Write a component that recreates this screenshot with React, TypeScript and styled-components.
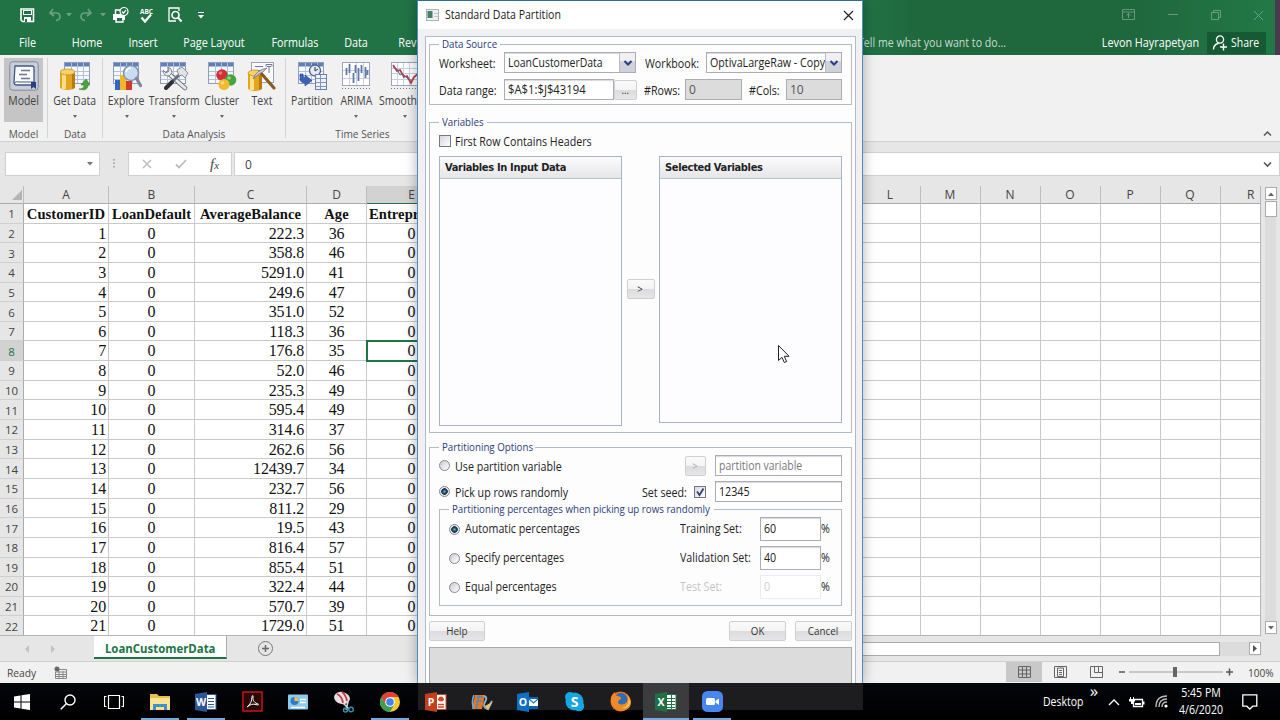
import type { ReactNode } from 'react';
import styled, { createGlobalStyle, css } from 'styled-components';

const theme = {
  green: '#217346',
  ui: '"Open Sans", "Noto Sans", sans-serif',
  serif: '"Liberation Serif", "Times New Roman", serif',
  line: '#c9c9c9',
  chrome: '#e6e6e6',
  ribbon: '#f1f1f1',
  field: '#abadb3',
};

const GlobalStyle = createGlobalStyle`
  * { box-sizing: border-box; }
  body { margin: 0; overflow: hidden; background: #fff; font-family: ${theme.ui}; }
`;

const Desktop = styled.div`
  position: relative;
  width: 1280px;
  height: 720px;
  overflow: hidden;
  display: flex;
  flex-direction: column;
`;

const Excel = styled.div`
  height: 683px;
  display: flex;
  flex-direction: column;
`;

/* narrow system lettering */
const narrow = (by = 0.89, from = 'center') => css`
  transform: scaleX(${by});
  transform-origin: ${from};
`;

const Narrow = styled.span<{ $by?: number; $from?: string }>`
  display: inline-block;
  white-space: nowrap;
  ${p => narrow(p.$by, p.$from)}
`;

/* ---------- title and tabs ---------- */

const GreenBar = styled.div`
  height: 55px;
  flex: none;
  color: #fff;
  border-right: 5px solid #4b3a4e;
  background: linear-gradient(90deg, #217346 0, #217346 860px, #1f673d 920px, #1f673d 1130px, #237848 1275px);
`;

const TitleRow = styled.div`
  height: 30px;
  display: flex;
  align-items: center;
  justify-content: space-between;
`;

const QuickAccess = styled.div`
  display: flex;
  align-items: center;
  height: 30px;
  margin-left: 13px;
`;

const Slot = styled.div<{ $w: number; $dim?: boolean }>`
  width: ${p => p.$w}px;
  flex: none;
  display: flex;
  align-items: center;
  justify-content: center;
  opacity: ${p => (p.$dim ? 0.32 : 1)};
`;

const Tabs = styled.div`
  height: 25px;
  display: flex;
  align-items: center;
`;

const Tab = styled.div<{ $w: number }>`
  width: ${p => p.$w}px;
  height: 16px;
  flex: none;
  display: flex;
  justify-content: center;
  font-size: 12px;
  line-height: 16px;
  white-space: nowrap;
  ${narrow(0.9)}
`;

const TellMe = styled(Tab)`
  margin-left: auto;
  justify-content: flex-start;
  color: #c3dccd;
  ${narrow(0.885, 'left')}
`;

const Share = styled.div`
  width: 59px;
  height: 22px;
  margin: 0 9px 0 8px;
  padding-left: 5px;
  display: flex;
  align-items: center;
  gap: 3px;
  background: #155a33;
  font-size: 12px;
`;

/* ---------- ribbon ---------- */

const Ribbon = styled.div`
  height: 87px;
  flex: none;
  display: flex;
  background: ${theme.ribbon};
  border-bottom: 1px solid #d2d2d2;
  color: #444;
`;

const RibbonGroup = styled.div<{ $w: number }>`
  width: ${p => p.$w}px;
  height: 80px;
  margin-top: 3px;
  flex: none;
  display: flex;
  flex-direction: column;
  justify-content: space-between;
  border-right: 1px solid #d4d4d4;
`;

const RibbonButtons = styled.div`
  display: flex;
  height: 64px;
`;

const RibbonButton = styled.div<{ $w: number; $active?: boolean }>`
  width: ${p => p.$w}px;
  flex: none;
  display: flex;
  flex-direction: column;
  align-items: center;
  padding-top: 3px;
  font-size: 12px;
  line-height: 16px;
  white-space: nowrap;
  ${p => p.$active && css`
    margin-left: 4px;
    background: #c5c5c5;
  `}
`;

const RibbonText = styled.span`
  margin-top: 2px;
  ${narrow(0.87)}
`;

const Caret = styled.i`
  margin-top: 6px;
  border: 2.5px solid transparent;
  border-top: 3px solid #666;
  border-bottom: 0;
`;

const GroupName = styled.div`
  text-align: center;
  font-size: 11px;
  line-height: 14px;
  color: #555;
  height: 11px;
  ${narrow(0.92)}
`;

const Collapse = styled.div`
  margin: auto 8px 4px auto;
  line-height: 0;
`;

/* ---------- formula bar ---------- */

const FormulaBar = styled.div`
  height: 44px;
  flex: none;
  display: flex;
  align-items: flex-start;
  padding: 10px 0 0 5px;
  background: ${theme.chrome};
`;

const FormulaBox = styled.div<{ $w?: number }>`
  height: 24px;
  ${p => (p.$w ? `width: ${p.$w}px; flex: none;` : 'flex: 1;')}
  border: 1px solid #d0d0d0;
  background: #fff;
  display: flex;
  align-items: center;
  color: #444;
  font-size: 12px;
`;

const Dots = styled.div`
  width: 28px;
  display: flex;
  height: 24px;
  justify-content: center;
  align-items: center;
`;

const Fx = styled.span`
  width: 33px;
  text-align: center;
  font-family: ${theme.serif};
  font-style: italic;
  font-size: 15px;
  small { font-size: 11px; }
`;

/* ---------- sheet ---------- */

const SheetArea = styled.div`
  height: 450px;
  flex: none;
  display: flex;
  background: ${theme.chrome};
`;

const columns = '24px 85px 86px 112px 60px 90px repeat(6, 67.25px) repeat(6, 60px) 40px';

const Sheet = styled.div`
  width: 1261px;
  display: grid;
  grid-template-columns: ${columns};
  grid-template-rows: 18px repeat(22, 19.65px);
  overflow: hidden;
  isolation: isolate;
  border-right: 1px solid #b5b5b5;
  border-bottom: 1px solid #b5b5b5;
`;

const ColHead = styled.div<{ $active?: boolean }>`
  display: flex;
  align-items: center;
  justify-content: center;
  font-size: 12px;
  color: #444;
  border-right: 1px solid #bdbdbd;
  border-bottom: 1px solid ${p => (p.$active ? theme.green : '#ababab')};
  background: ${p => (p.$active ? '#d2d2d2' : theme.chrome)};
`;

const LastHead = styled(ColHead)`
  justify-content: flex-end;
  padding-right: 5px;
`;

const Line = styled.div`
  display: contents;
`;

const RowHead = styled.div<{ $active?: boolean }>`
  display: flex;
  align-items: center;
  justify-content: center;
  font-size: 11.5px;
  line-height: 14px;
  padding-top: 2px;
  color: ${p => (p.$active ? theme.green : '#444')};
  background: ${p => (p.$active ? '#d2d2d2' : theme.chrome)};
  border-right: 1px solid #ababab;
  border-bottom: 1px solid #cfcfcf;
`;

const Cell = styled.div<{ $align?: string; $bold?: boolean; $selected?: boolean }>`
  background: #fff;
  font-family: ${theme.serif};
  font-size: ${p => (p.$bold ? 14.6 : 16)}px;
  font-weight: ${p => (p.$bold ? 700 : 400)};
  letter-spacing: ${p => (p.$bold ? 0.05 : -0.15)}px;
  line-height: 20.5px;
  color: #111;
  text-align: ${p => p.$align ?? 'center'};
  padding: 0 2px;
  white-space: nowrap;
  overflow: hidden;
  border-right: 1px solid ${theme.line};
  border-bottom: 1px solid ${theme.line};
  ${p => p.$selected && css`
    outline: 2px solid ${theme.green};
    outline-offset: -1px;
    z-index: 1;
  `}
`;

const VScroll = styled.div`
  width: 15px;
  padding: 1px 0 2px 4px;
  display: flex;
  flex-direction: column;
`;

const ScrollButton = styled.div`
  width: 12px;
  height: 13px;
  flex: none;
  border: 1px solid #ababab;
  background: #fff;
  display: flex;
  align-items: center;
  justify-content: center;
  color: #666;
`;

const VThumb = styled.div`
  width: 12px;
  height: 16px;
  margin-top: 1px;
  background: #fff;
  border: 1px solid #ababab;
`;

const VTrack = styled.div`
  flex: 1;
  background: #dcdcdc;
`;

const SheetTabs = styled.div`
  height: 25px;
  flex: none;
  display: flex;
  background: ${theme.chrome};
`;

const NavArrows = styled.div`
  width: 94px;
  padding-left: 24px;
  display: flex;
  align-items: center;
  gap: 20px;
`;

const SheetTab = styled.div`
  width: 133px;
  height: 23px;
  background: #fff;
  border-bottom: 2px solid ${theme.green};
  border-right: 1px solid #ababab;
  color: ${theme.green};
  font-weight: 700;
  font-size: 12px;
  line-height: 25px;
  text-align: center;
`;

const AddSheet = styled.div`
  margin: 4px 0 0 30px;
  line-height: 0;
`;

const HScroll = styled.div`
  margin: 6px 19px 0 auto;
  width: 500px;
  height: 14px;
  display: flex;
  background: #dcdcdc;
`;

const HThumb = styled.div`
  width: 459px;
  border: 1px solid #ababab;
  background: #fff;
`;

const HTrack = styled.div`
  flex: 1;
`;

const StatusBar = styled.div`
  height: 22px;
  flex: none;
  display: flex;
  align-items: center;
  background: ${theme.ribbon};
  border-top: 1px solid #cfcfcf;
  font-size: 11px;
  color: #444;
  padding: 0 0 1px 7px;
`;

const ViewButton = styled.div<{ $active?: boolean }>`
  width: 36px;
  height: 20px;
  display: flex;
  align-items: center;
  justify-content: center;
  background: ${p => (p.$active ? '#c8c8c8' : 'transparent')};
`;

const Zoom = styled.span`
  width: 46px;
  padding-left: 14px;
  font-size: 11.5px;
`;

/* ---------- dialog ---------- */

const Dialog = styled.div`
  position: absolute;
  left: 417px;
  top: 0;
  width: 446px;
  height: 683px;
  overflow: hidden;
  background: #f0f0f2;
  border: 1px solid #4d8fc4;
  border-top-color: #2d6f88;
  border-bottom: 0;
  font-size: 12px;
  line-height: 16px;
  color: #222;
`;

const DialogShadow = styled.div`
  position: absolute;
  left: 417px;
  top: 0;
  width: 446px;
  height: 683px;
  box-shadow: 0 0 12px rgba(0, 0, 0, 0.32);
  clip-path: inset(0 -14px 0 -14px);
`;

const DialogTitle = styled.div`
  height: 28px;
  display: flex;
  align-items: center;
  padding: 0 8px;
  background: #fff;
`;

const DialogName = styled.span`
  margin-left: 6px;
  flex: 1;
  ${narrow(0.88, 'left')}
`;

const DialogBody = styled.div`
  margin: 7px 6px 0 7px;
  height: 660px;
  border: 1px solid #a9bdd4;
  background: #fdfdfe;
  padding: 0 3px;
`;

const Group = styled.fieldset<{ $h: number; $mt?: number }>`
  margin: ${p => p.$mt ?? 0}px 0 0;
  height: ${p => p.$h}px;
  min-width: 0;
  border: 1px solid #b4bac6;
  padding: 0 9px;
`;

const Legend = styled.legend<{ $w: number }>`
  width: ${p => p.$w}px;
  height: 14px;
  margin: 0;
  padding: 0 3px;
  font-size: 11px;
  line-height: 14px;
  color: #2b3c78;
  white-space: nowrap;
`;

const Row = styled.div<{ $h: number; $mt?: number }>`
  display: flex;
  align-items: center;
  height: ${p => p.$h}px;
  margin-top: ${p => p.$mt ?? 0}px;
`;

const Label = styled.span<{ $w?: number; $flat?: boolean; $faint?: boolean }>`
  ${p => p.$w && `width: ${p.$w}px;`}
  flex: none;
  padding-top: ${p => (p.$flat ? 0 : 2)}px;
  white-space: nowrap;
  color: ${p => (p.$faint ? '#c4c4c8' : 'inherit')};
  ${narrow(0.89, 'left')}
`;

const Field = styled.div<{ $w: number; $h?: number; $gray?: boolean; $muted?: boolean; $faint?: boolean }>`
  width: ${p => p.$w}px;
  height: ${p => p.$h ?? 21}px;
  flex: none;
  display: flex;
  align-items: center;
  overflow: hidden;
  white-space: nowrap;
  padding-left: 3px;
  border: 1px solid ${p => (p.$faint ? '#ececee' : theme.field)};
  background: ${p => (p.$gray ? '#dcdcdd' : '#fff')};
  box-shadow: ${p => (p.$gray || p.$faint ? 'none' : 'inset 0 2px 1px -1px #d8d8de')};
  color: ${p => (p.$faint ? '#d0d0d4' : p.$muted ? '#777' : p.$gray ? '#555' : '#222')};
`;

const FieldText = styled.span`
  flex: 1;
  min-width: 0;
  overflow: hidden;
`;

const DropArrow = styled.span`
  width: 16px;
  height: 19px;
  flex: none;
  display: flex;
  align-items: center;
  justify-content: center;
  border-left: 1px solid #b9bcc8;
  background: linear-gradient(#f0f0f4 40%, #cfd2da 45%);
`;

const ButtonBox = styled.div<{ $w: number; $muted?: boolean }>`
  width: ${p => p.$w}px;
  height: 20px;
  flex: none;
  display: flex;
  align-items: center;
  justify-content: center;
  border: 1px solid #cfcfd2;
  border-radius: 2px;
  background: linear-gradient(#fafafa 0, #f4f4f5 50%, #dcdcde 51%, #e6e6e8 100%);
  color: ${p => (p.$muted ? '#aaa' : '#333')};
  font-size: 11px;
`;

const Button = ({ w, muted, children }: { w: number; muted?: boolean; children: ReactNode }) => (
  <ButtonBox $w={w} $muted={muted}><Narrow>{children}</Narrow></ButtonBox>
);

const Check = styled.span`
  width: 12px;
  height: 12px;
  flex: none;
  border: 1px solid #74777f;
  background: linear-gradient(135deg, #d6d8dc, #fdfdfd);
  line-height: 0;
`;

const Radio = styled.span<{ $on?: boolean }>`
  width: 11px;
  height: 11px;
  flex: none;
  border: 1px solid #85888e;
  border-radius: 50%;
  background: ${p => (p.$on
    ? 'radial-gradient(circle at 50% 50%, #6fb3cf 0, #1f4560 2px, #1d3850 3px, #e6e8ea 3.6px)'
    : 'linear-gradient(135deg, #c9cbd0, #fff)')};
`;

const Gap = styled.span<{ $w?: number }>`
  ${p => (p.$w === undefined ? 'flex: 1;' : `width: ${p.$w}px; flex: none;`)}
`;

const Lists = styled.div`
  display: flex;
  align-items: flex-start;
  justify-content: space-between;
  margin-top: 8px;
`;

const ArrowHolder = styled.div`
  margin-top: 123px;
  display: flex;
  justify-content: center;
`;

const List = styled.div<{ $h: number }>`
  width: 183px;
  height: ${p => p.$h}px;
  border: 1px solid #a4b4ca;
  background: #fdfdff;
`;

const ListHead = styled.div`
  height: 22px;
  padding-left: 5px;
  font-weight: 700;
  font-size: 11px;
  line-height: 21px;
  font-family: "DejaVu Sans Condensed", "DejaVu Sans", sans-serif;
  font-stretch: condensed;
  letter-spacing: -0.33px;
  border-bottom: 1px solid #bcc2cc;
  background: linear-gradient(#fbfbfc, #e6e6e9);
`;

const Message = styled.div`
  height: 60px;
  margin-top: 6px;
  border: 1px solid #a9a9ad;
  background: #dcdcdd;
`;

/* ---------- taskbar ---------- */

const Taskbar = styled.div`
  height: 37px;
  flex: none;
  display: flex;
  color: #fff;
  background:
    linear-gradient(90deg, transparent 418px, #1d1d1f 418px, #1d1d1f 863px, transparent 863px) 0 0 / 100% 27px no-repeat,
    linear-gradient(#05060a, #000);
`;

const TaskList = styled.div`
  display: flex;
  margin-left: -1px;
`;

const Task = styled.div<{ $open?: boolean; $active?: boolean }>`
  width: 46px;
  height: 37px;
  flex: none;
  display: flex;
  align-items: center;
  justify-content: center;
  background: ${p => (p.$active ? '#3b3c3e' : 'none')};
  padding-top: ${p => (p.$open || p.$active ? 2 : 0)}px;
  border-bottom: ${p => (p.$open || p.$active ? '2px solid #76a9dc' : '0')};
  ${p => p.$open && css`
    width: 38px;
    margin: 0 4px;
  `}
`;

const Tray = styled.div`
  margin-left: auto;
  display: flex;
  align-items: center;
  font-size: 12px;
  line-height: 17px;
`;

const Clock = styled.div`
  width: 58px;
  margin-top: -2px;
  text-align: center;
  ${narrow(0.88)}
`;

const Raquo = styled.span`
  width: 22px;
  text-align: center;
  align-self: flex-start;
  font-size: 17px;
  line-height: 15px;
`;

const Pointer = styled.svg`
  position: absolute;
  left: 777px;
  top: 344px;
`;

/* ---------- icons ---------- */

const Icon = styled.svg`
  flex: none;
`;

const Art = ({ children, w = 28, h = w }: { children: ReactNode; w?: number; h?: number }) => (
  <Icon width={w} height={h} viewBox={`0 0 ${w} ${h}`} fill="none">{children}</Icon>
);

const SheetBase = ({ x = 4 }: { x?: number }) => (
  <g>
    <rect x={x + 0.5} y="1.5" width="25" height="21" fill="#f5f8fd" stroke="#8e9dbd" />
    <rect x={x + 1} y="2" width="24" height="3.5" fill="#5f7fb6" />
    <path d={`M${x + 1} 10.5h24M${x + 1} 14.5h24M${x + 1} 18.5h24M${x + 7.5} 2v20M${x + 13.5} 2v20M${x + 19.5} 2v20`} stroke="#b3c1da" />
  </g>
);

const Cylinder = ({ x = 0, y = 8, w = 15 }: { x?: number; y?: number; w?: number }) => (
  <g>
    <path d={`M${x} ${y + 3}v15c0 4 ${w} 4 ${w} 0v-15z`} fill="#e3a51d" />
    <path d={`M${x + 2} ${y + 5}h4v15h-4z`} fill="#fbe28a" />
    <path d={`M${x + w - 3} ${y + 4}h3v15l-3 1z`} fill="#b97a0c" />
    <ellipse cx={x + w / 2} cy={y + 3} rx={w / 2} ry="3" fill="#f8d266" stroke="#b9851b" strokeWidth=".7" />
  </g>
);

const ModelIcon = () => (
  <Art w={30}>
    <rect x=".8" y=".8" width="28.4" height="28.4" rx="3" fill="#c9ced8" stroke="#7e8ca6" />
    <path d="M6 5h17q2 0 2 2v17h-17q-3 0-3-3z" fill="#fbfcff" stroke="#42587f" strokeWidth="1.3" />
    <path d="M5 22q2-2 5-1h15" stroke="#42587f" />
    <path d="M12 9.500h9M10 13.500h8M12 17.500h9" stroke="#6b7690" strokeWidth="1.4" />
    <path d="M22 21h5v7l-2.500-2-2.500 2z" fill="#2a3e83" />
  </Art>
);
const GetDataIcon = () => (
  <Art w={30}><SheetBase /><Cylinder /><path d="M19 28c4 0 5-2 5-4h-3l5-6 4 6h-2c0 4-3 6-9 4z" fill="#4ca33c" stroke="#2d7a25" strokeWidth=".6" /></Art>
);
const ExploreIcon = () => (
  <Art w={30}>
    <SheetBase x={1} />
    <path d="M3 19h5v10h-5z" fill="#3566c6" /><path d="M8 14h6v15h-6z" fill="#f0b824" /><path d="M14 20h6v9h-6z" fill="#d33a2c" />
    <circle cx="19" cy="12" r="7.500" fill="#c9dcf3" stroke="#8291ab" strokeWidth="1.500" />
    <path d="M14 11q1-4 5-4" stroke="#fff" strokeWidth="1.500" /><path d="M24.500 17.500l4 7" stroke="#7e8797" strokeWidth="3.200" strokeLinecap="round" />
  </Art>
);
const TransformIcon = () => (
  <Art w={30}>
    <SheetBase x={1} />
    <path d="M9 12L26 27" stroke="#6b6f78" strokeWidth="4.500" strokeLinecap="round" /><path d="M9 12L26 27" stroke="#e9ebee" strokeWidth="3" strokeLinecap="round" />
    <path d="M4 9q0 6 6 6l3-3q0-5-4-6l1 4-3 2z" fill="#e9ebee" stroke="#6b6f78" strokeWidth=".8" />
    <path d="M21 13L9 25" stroke="#6b6f78" strokeWidth="3" /><path d="M13 21L7 27" stroke="#2e3138" strokeWidth="4" strokeLinecap="round" />
    <path d="M18 9l5-3 6 6-3 5-3-3-3 1z" fill="#dfe2e6" stroke="#777c86" strokeWidth=".8" />
  </Art>
);
const ClusterIcon = () => (
  <Art w={30}>
    <SheetBase x={1} />
    <circle cx="15" cy="14" r="5.800" fill="#cf3138" /><circle cx="23.500" cy="19" r="5.800" fill="#42a63f" /><circle cx="17" cy="23.500" r="5.500" fill="#f2b92c" />
    <circle cx="13.500" cy="12" r="1.800" fill="#e8797b" /><circle cx="22" cy="17" r="1.800" fill="#8fd486" /><circle cx="15.500" cy="22" r="1.800" fill="#fbe08a" />
  </Art>
);
const TextIcon = () => (
  <Art w={30}>
    <rect x="4.500" y="1.500" width="22" height="20" fill="#fafaff" stroke="#9aa2b8" />
    <path d="M8 5.500h8M8 9.500h7M20 5.500h4M22 6v6M19 5.500v-2h6v2" stroke="#6f7a9a" />
    <Cylinder x={1} y={9} w={14} />
    <path d="M13 11L27 27" stroke="#8a5a23" strokeWidth="3.200" strokeLinecap="round" /><path d="M6 18q3-9 14-11l-4 4q-5 2-10 7z" fill="#c8cbd2" stroke="#666b75" strokeWidth=".7" />
  </Art>
);
const PartitionIcon = () => (
  <Art w={30}>
    <SheetBase x={1} />
    <circle cx="18" cy="9.500" r="5.500" fill="#e4ebf7" stroke="#4e5f88" strokeWidth="1.300" /><path d="M18 6v4l3-2" stroke="#333" />
    <rect x="18.500" y="13.500" width="11" height="15" fill="#edf3fc" stroke="#6b7fae" /><path d="M19 17.500h10M19 21.500h10M19 25.500h10M23.500 14v14" stroke="#8496bd" />
    <path d="M3 13v6q1 3 5 3v3l7-5.500-7-5.500v3q-2 0-2-4z" fill="#3c62b8" stroke="#26458d" strokeWidth=".6" />
  </Art>
);
const ArimaIcon = () => (
  <Art w={30}>
    <rect x="1.500" y="1.500" width="27" height="23" fill="#fff" stroke="#9aa4ba" /><path d="M2 9.500h26M2 17.500h26M8.500 2v22M15.500 2v22M22.500 2v22" stroke="#c8cfdf" />
    <path d="M5.500 7v7M8.500 3v9M12.500 12v10M14.500 4v8M17.500 7v13M20.500 4v8M24.500 6v11M26.500 9v5" stroke="#6078a8" strokeWidth="1.800" /><path d="M1 27.500h28" stroke="#777" strokeDasharray="1 2" />
  </Art>
);
const SmoothIcon = () => (
  <Art w={30}>
    <rect x="1.500" y="1.500" width="27" height="23" fill="#fff" stroke="#9aa4ba" /><path d="M2 7.500h26M2 12.500h26M2 18.500h26M7.500 2v22M13.500 2v22M19.500 2v22" stroke="#c8cfdf" />
    <path d="M3 4l4 6 3-1 4 7 3-1 4 7 3-6 5-4" stroke="#b63e48" strokeWidth="1.800" /><path d="M3 6l4 2 3 6 3-1 5 5 3 1" stroke="#596b92" /><path d="M1 27.500h28" stroke="#777" strokeDasharray="1 2" />
  </Art>
);

const CaretDown = ({ c = '#fff' }: { c?: string }) => <Art w={6} h={4}><path d="M0 0h6L3 3.500z" fill={c} /></Art>;

const quickAccess = [
  { w: 28, art: <Art w={15}><path d="M1 1h12.500v12.500H2.500L1 12z" stroke="#fff" strokeWidth="1.600" /><path d="M3 2h9v5H3zM4 9h7v5H4z" fill="#fff" /><path d="M4 3h7v3H4zM5 11h2v3H5z" fill="#217346" /></Art> },
  { w: 28, dim: true, art: <Art w={14}><path d="M5 1L2 5l4 3M2 5h6q4 0 4 3.500T8 12.500" stroke="#fff" strokeWidth="1.700" /></Art> },
  { w: 0, dim: true, art: <CaretDown /> },
  { w: 34, dim: true, art: <Art w={14}><path d="M9 1l3 4-4 3M12 5H6Q2 5 2 8.500T6 12.500" stroke="#fff" strokeWidth="1.700" /></Art> },
  { w: 0, dim: true, art: <CaretDown /> },
  { w: 34, art: <Art w={17}><path d="M1 7h12v6H1z" fill="#fff" /><path d="M3.500 7V3h5M4 11h7v4H4z" stroke="#fff" strokeWidth="1.400" /><path d="M5 11h5v3H5z" fill="#217346" /><circle cx="12" cy="4.500" r="4" fill="#217346" stroke="#fff" strokeWidth="1.200" /><path d="M10 4.500l1.500 1.700L14 3" stroke="#fff" strokeWidth="1.200" /></Art> },
];

const WindowButtons = () => (
  <>
    <Slot $w={52} $dim><Art w={14} h={12}><path d="M.5.5h12v10H.5zM.5 3h12M6.500 9V4.500M4.500 6.500l2-2 2 2" stroke="#fff" /></Art></Slot>
    <Slot $w={36} $dim><Art w={10} h={2}><path d="M0 .5h10" stroke="#fff" /></Art></Slot>
    <Slot $w={50} $dim><Art w={11}><path d="M.5 2.500h7v7h-7zM2.500 2.500v-2h7v7h-2" stroke="#fff" /></Art></Slot>
    <Slot $w={34} $dim><Art w={11}><path d="M1 1l9 9M10 1l-9 9" stroke="#fff" /></Art></Slot>
  </>
);

const Tile = ({ color, dark, letter, children }: { color: string; dark: string; letter: string; children: ReactNode }) => (
  <Art w={22} h={22}>
    <rect x="10" y="3.500" width="11" height="15" fill="#fff" stroke={color} />
    {children}
    <path d="M0 3l12-2v20L0 19z" fill={dark} />
    <text x="6" y="15" textAnchor="middle" fontSize="10.500" fontWeight="700" fontFamily="Open Sans" fill="#fff">{letter}</text>
  </Art>
);

const tasks: { art: ReactNode; open?: boolean; active?: boolean }[] = [
  { art: <Art w={16}><path d="M0 2.500l6.500-1v6H0zM7.500 1.300L16 0v7.500H7.500zM0 8.500h6.500v6L0 13.500zM7.500 8.500H16V16l-8.500-1.200z" fill="#fff" /></Art> },
  { art: <Art w={16}><circle cx="10" cy="6" r="5" stroke="#fff" strokeWidth="1.400" /><path d="M6.500 9.500L.8 15.200" stroke="#fff" strokeWidth="1.500" /></Art> },
  { art: <Art w={20} h={16}><path d="M4.500 1.500h11v13h-11zM2.500 2.500h-2v10h2M17.500 2.500h2v10h-2" stroke="#fff" strokeWidth="1.200" /></Art> },
  { open: true, art: <Art w={20} h={18}><path d="M0 1h7l2 2h11v14H0z" fill="#e8bd4b" /><path d="M0 5h20v12H0z" fill="#fbe394" /><path d="M3 17v-6h14v6h-3v-3H6v3z" fill="#3d93c9" /></Art> },
  { open: true, art: <Tile color="#2b579a" dark="#2b579a" letter="W"><path d="M13 7.500h6M13 10.500h6M13 13.500h6M13 16h6" stroke="#2b579a" /></Tile> },
  { art: <Art w={21}><rect x="1" y="1" width="19" height="19" fill="#2c0707" stroke="#c3161c" strokeWidth="1.500" /><path d="M5 16c3-2 5-6 5-10 0-2 1.500-2 1 0-.5 4 2 6 5 7 1.500.5 0 1.500-2 .5-3-1-6 0-9 2.500z" stroke="#fff" strokeWidth="1" /></Art> },
  { art: <Art w={20} h={16}><rect width="20" height="15" y=".5" rx="1" fill="#8ecaf0" /><circle cx="6.500" cy="7" r="4" fill="#2f7dc4" /><path d="M6.500 7V3a4 4 0 014 4z" fill="#f6c244" /><path d="M12 5.500h6M12 8.500h6M3 13.500h14" stroke="#fff" strokeWidth="1.500" /></Art> },
  { art: <Art w={22}><ellipse cx="9" cy="7" rx="8" ry="6" fill="#e9dfe2" transform="rotate(15 9 7)" /><path d="M4 3q5 2 6 9M9 1q4 3 5 9" stroke="#bd3d4b" strokeWidth="1.800" /><path d="M10 12l6 6M15 11l-2 8" stroke="#cfd8df" strokeWidth="1.500" /><circle cx="18" cy="18.500" r="2.300" stroke="#3c8aa8" strokeWidth="1.400" /><circle cx="12.500" cy="19" r="2" stroke="#3c8aa8" strokeWidth="1.400" /></Art> },
  { open: true, art: <Art w={20}><circle cx="10" cy="10" r="10" fill="#f7c934" /><path d="M1.340 5A10 10 0 0118.660 5H10L5.670 12.500z" fill="#dc4437" /><path d="M1.340 5A10 10 0 0010 20l4.330-7.500H5.670z" fill="#3b9e52" /><circle cx="10" cy="10" r="4.800" fill="#fff" /><circle cx="10" cy="10" r="3.800" fill="#4482ec" /></Art> },
  { art: <Tile color="#d24726" dark="#c43e1c" letter="P"><path d="M13 8.500h6M13 13.500h6M13 16h6" stroke="#d24726" strokeWidth="1.500" /><circle cx="16" cy="8" r="2.500" fill="#d24726" /></Tile> },
  { art: <Art w={22} h={18}><path d="M4 2h10l-3 14H1z" fill="#e1772d" /><path d="M3 2q-3 7 0 14" stroke="#7ba4c2" strokeWidth="1.800" /><path d="M6 4h6M5 8h6M8 2L5 16" stroke="#5a86ab" strokeWidth="1.400" /><path d="M13 3q4 1 1 6t3 7l4-8" stroke="#8fb0c4" strokeWidth="2" /><path d="M14 13l7-4-4 8z" fill="#e9c46d" /></Art> },
  { art: <Art w={22}><path d="M10 6h11v12H10z" fill="#0a64b4" /><path d="M12 8h9v7h-9z" fill="#fff" /><path d="M12 8l4.500 4L21 8" stroke="#0f78d0" strokeWidth="1.300" /><path d="M0 3l12-2v20L0 19z" fill="#0f6fc5" /><text x="6" y="15" textAnchor="middle" fontSize="10.500" fontWeight="700" fontFamily="Open Sans" fill="#fff">O</text></Art> },
  { art: <Art w={21}><circle cx="10.500" cy="10.500" r="9" fill="#17a5e4" /><circle cx="6" cy="6" r="5" fill="#17a5e4" /><circle cx="15" cy="15" r="5.200" fill="#17a5e4" /><text x="10.500" y="15.500" textAnchor="middle" fontSize="14" fontWeight="700" fontFamily="Open Sans" fill="#fff">S</text></Art> },
  { art: <Art w={21}><circle cx="10.500" cy="10.500" r="10" fill="#e8742a" /><circle cx="11" cy="8.500" r="6.500" fill="#2d6cb7" /><path d="M1 6q1-3 4-5 0 3 2 4 4 0 4 3-3 1-3 4 3 3 8 0 4-4 1-9 7 7 2 14-7 6-14 0Q0 13 1 6z" fill="#ee8a2b" /><path d="M17 4q3 5 0 10-2 3-5 3 7 1 8-5 0-5-3-8z" fill="#f8c840" /></Art> },
  { active: true, art: <Tile color="#217346" dark="#1e7145" letter="X"><path d="M12 7.500h8M12 10.500h8M12 13.500h8M12 16.500h8M16.500 4v14" stroke="#217346" /></Tile> },
  { open: true, art: <Art w={21}><rect width="21" height="21" rx="5.500" fill="#4a86f0" /><rect x="4" y="7" width="9" height="7" rx="1.500" fill="#fff" /><path d="M13.500 10l3.500-2.500v6.500l-3.500-2.500z" fill="#fff" /></Art> },
];

/* ---------- data ---------- */

const loans = [
  ['222.3', 36], ['358.8', 46], ['5291.0', 41], ['249.6', 47], ['351.0', 52], ['118.3', 36], ['176.8', 35],
  ['52.0', 46], ['235.3', 49], ['595.4', 49], ['314.6', 37], ['262.6', 56], ['12439.7', 34], ['232.7', 56],
  ['811.2', 29], ['19.5', 43], ['816.4', 57], ['855.4', 51], ['322.4', 44], ['570.7', 39], ['1729.0', 51],
];

const blanks = Array.from({ length: 13 }, (_, i) => i);
const heads = ['A', 'B', 'C', 'D', 'E', 'F', 'G', 'H', 'I', 'J', 'K', 'L', 'M', 'N', 'O', 'P', 'Q'];

const percentages = [
  { label: 'Automatic percentages', set: 'Training Set:', value: '60', on: true },
  { label: 'Specify percentages', set: 'Validation Set:', value: '40' },
  { label: 'Equal percentages', set: 'Test Set:', value: '0', faint: true },
];

const DropDown = () => (
  <DropArrow><Art w={8} h={6}><path d="M.5 1L4 4.500 7.500 1" stroke="#2d3f83" strokeWidth="2" /></Art></DropArrow>
);

const Caption = ({ w, children }: { w: number; children: string }) => (
  <Legend $w={w}><Narrow $by={0.885} $from="left">{children}</Narrow></Legend>
);

const PartitionDialog = () => (
  <Dialog>
    <DialogTitle>
      <Art w={13} h={12}><rect x=".5" y=".5" width="12" height="11" fill="#eef1ee" stroke="#a8b4b0" /><rect x="1.500" y="2" width="5" height="7" fill="#43806c" /><path d="M8 4.500h4M8 7.500h4" stroke="#bcc8c4" /></Art>
      <DialogName>Standard Data Partition</DialogName>
      <Art w={11}><path d="M1 1l9 9M10 1l-9 9" stroke="#222" strokeWidth="1.200" /></Art>
    </DialogTitle>
    <DialogBody>
      <Group $h={68}>
        <Caption w={61}>Data Source</Caption>
        <Row $h={21} $mt={1}>
          <Label $w={65}>Worksheet:</Label>
          <Field $w={132}><FieldText><Narrow $from="left" $by={0.87}>LoanCustomerData</Narrow></FieldText><DropDown /></Field>
          <Gap $w={9} />
          <Label $w={61}>Workbook:</Label>
          <Field $w={136}><FieldText><Narrow $from="left">OptivaLargeRaw - Copy</Narrow></FieldText><DropDown /></Field>
        </Row>
        <Row $h={21} $mt={6}>
          <Label $w={65}>Data range:</Label>
          <Field $w={110}><Narrow $from="left" $by={0.94}>$A$1:$J$43194</Narrow></Field>
          <Button w={23}>...</Button>
          <Gap $w={7} />
          <Label $w={41}>#Rows:</Label>
          <Field $w={57} $gray>0</Field>
          <Gap $w={7} />
          <Label $w={37}>#Cols:</Label>
          <Field $w={56} $gray>10</Field>
        </Row>
      </Group>
      <Group $h={318} $mt={10}>
        <Caption w={48}>Variables</Caption>
        <Row $h={14} $mt={5}>
          <Check />
          <Gap $w={4} />
          <Label>First Row Contains Headers</Label>
        </Row>
        <Lists>
          <List $h={270}><ListHead>Variables In Input Data</ListHead></List>
          <ArrowHolder><Button w={28}>&gt;</Button></ArrowHolder>
          <List $h={267}><ListHead>Selected Variables</ListHead></List>
        </Lists>
      </Group>
      <Group $h={176} $mt={7}>
        <Caption w={96}>Partitioning Options</Caption>
        <Row $h={21} $mt={1}>
          <Radio />
          <Gap $w={5} />
          <Label>Use partition variable</Label>
          <Gap />
          <Button w={21} muted>&gt;</Button>
          <Gap $w={9} />
          <Field $w={127} $muted><Narrow $from="left" $by={0.87}>partition variable</Narrow></Field>
        </Row>
        <Row $h={21} $mt={5}>
          <Radio $on />
          <Gap $w={5} />
          <Label>Pick up rows randomly</Label>
          <Gap />
          <Label $w={52}>Set seed:</Label>
          <Check><Art w={10}><path d="M2 4.500l2.500 3.500L8.500 1.500" stroke="#35427c" strokeWidth="1.800" /></Art></Check>
          <Gap $w={9} />
          <Field $w={127}><Narrow $from="left">12345</Narrow></Field>
        </Row>
        <Group $h={104}>
          <Caption w={265}>Partitioning percentages when picking up rows randomly</Caption>
          {percentages.map((p, i) => (
            <Row key={p.label} $h={24} $mt={i ? 5 : 1}>
              <Radio $on={p.on} />
              <Gap $w={5} />
              <Label $w={215} $flat>{p.label}</Label>
              <Label $w={80} $flat $faint={p.faint}>{p.set}</Label>
              <Field $w={61} $h={24} $faint={p.faint}><Narrow $from="left">{p.value}</Narrow></Field>
              <Label $flat>%</Label>
            </Row>
          ))}
        </Group>
      </Group>
      <Row $h={20} $mt={5}>
        <Button w={56}>Help</Button>
        <Gap />
        <Button w={57}>OK</Button>
        <Gap $w={9} />
        <Button w={57}>Cancel</Button>
      </Row>
      <Message />
    </DialogBody>
  </Dialog>
);

export default function App() {
  return (
    <Desktop>
      <GlobalStyle />
      <Excel>
        <GreenBar>
          <TitleRow>
            <QuickAccess>
              {quickAccess.map((q, i) => <Slot key={i} $w={q.w} $dim={q.dim}>{q.art}</Slot>)}
              <Slot $w={20}>
                <Art w={16} h={17}>
                  <text x="7.500" y="6.500" textAnchor="middle" fontSize="7" fontWeight="700" fontFamily="Open Sans" fill="#fff" textLength="13" lengthAdjust="spacingAndGlyphs">ABC</text>
                  <path d="M2.500 10.500l3.500 4 6-7" stroke="#fff" strokeWidth="2.200" />
                </Art>
              </Slot>
              <Slot $w={36}><Art w={16}><path d="M12 4V1H2v13h7" stroke="#fff" strokeWidth="1.300" /><circle cx="8.500" cy="8" r="3.500" stroke="#fff" strokeWidth="1.600" /><path d="M11 10.500l3.500 4" stroke="#fff" strokeWidth="2" /></Art></Slot>
              <Slot $w={16}><Art w={6} h={8}><path d="M0 1.500h6" stroke="#fff" /><path d="M0 4h6L3 7.500z" fill="#fff" /></Art></Slot>
            </QuickAccess>
            <QuickAccess><WindowButtons /></QuickAccess>
          </TitleRow>
          <Tabs>
            <Tab $w={55}>File</Tab>
            <Tab $w={64}>Home</Tab>
            <Tab $w={48}>Insert</Tab>
            <Tab $w={94}>Page Layout</Tab>
            <Tab $w={68}>Formulas</Tab>
            <Tab $w={54}>Data</Tab>
            <Tab $w={66}>Review</Tab>
            <TellMe $w={244}>Tell me what you want to do...</TellMe>
            <Tab $w={97}>Levon Hayrapetyan</Tab>
            <Share>
              <Art w={16}><circle cx="8" cy="4.500" r="3.600" stroke="#fff" strokeWidth="1.300" /><path d="M1.500 14.500q0-5 5-6.300M11.500 8.500v7M8 12h7" stroke="#fff" strokeWidth="1.400" /></Art>
              <Narrow $by={0.87} $from="left">Share</Narrow>
            </Share>
          </Tabs>
        </GreenBar>
        <Ribbon>
          <RibbonGroup $w={48}>
            <RibbonButtons><RibbonButton $w={39} $active><ModelIcon /><RibbonText>Model</RibbonText></RibbonButton></RibbonButtons>
            <GroupName>Model</GroupName>
          </RibbonGroup>
          <RibbonGroup $w={55}>
            <RibbonButtons><RibbonButton $w={54}><GetDataIcon /><RibbonText>Get Data</RibbonText><Caret /></RibbonButton></RibbonButtons>
            <GroupName>Data</GroupName>
          </RibbonGroup>
          <RibbonGroup $w={183}>
            <RibbonButtons>
              <RibbonButton $w={47}><ExploreIcon /><RibbonText>Explore</RibbonText><Caret /></RibbonButton>
              <RibbonButton $w={48}><TransformIcon /><RibbonText>Transform</RibbonText><Caret /></RibbonButton>
              <RibbonButton $w={48}><ClusterIcon /><RibbonText>Cluster</RibbonText><Caret /></RibbonButton>
              <RibbonButton $w={31}><TextIcon /><RibbonText>Text</RibbonText></RibbonButton>
            </RibbonButtons>
            <GroupName>Data Analysis</GroupName>
          </RibbonGroup>
          <RibbonGroup $w={154}>
            <RibbonButtons>
              <RibbonButton $w={52}><PartitionIcon /><RibbonText>Partition</RibbonText></RibbonButton>
              <RibbonButton $w={36}><ArimaIcon /><RibbonText>ARIMA</RibbonText><Caret /></RibbonButton>
              <RibbonButton $w={62}><SmoothIcon /><RibbonText>Smoothing</RibbonText><Caret /></RibbonButton>
            </RibbonButtons>
            <GroupName>Time Series</GroupName>
          </RibbonGroup>
          <Collapse><Art w={9} h={7}><path d="M1 5.500L4.500 2 8 5.500" stroke="#555" strokeWidth="1.500" /></Art></Collapse>
        </Ribbon>
        <FormulaBar>
          <FormulaBox $w={95}><Gap /><CaretDown c="#777" /><Gap $w={6} /></FormulaBox>
          <Dots><Art w={2} h={10}><path d="M1 0v10" stroke="#999" strokeWidth="1.500" strokeDasharray="1.500 2" /></Art></Dots>
          <FormulaBox $w={104}>
            <Slot $w={35}><Art w={10}><path d="M1 1l8 8M9 1l-8 8" stroke="#bbb" strokeWidth="1.400" /></Art></Slot>
            <Slot $w={34}><Art w={12} h={10}><path d="M1 5.500l3 3L11 1" stroke="#bbb" strokeWidth="1.800" /></Art></Slot>
            <Fx>f<small>x</small></Fx>
          </FormulaBox>
          <Gap $w={2} />
          <FormulaBox><Gap $w={10} />0<Gap /><Art w={9} h={7}><path d="M1 1.500L4.500 5 8 1.500" stroke="#555" strokeWidth="1.600" /></Art><Gap $w={7} /></FormulaBox>
        </FormulaBar>
        <SheetArea>
          <Sheet>
            <ColHead><Gap /><Art w={12}><path d="M11 1v10H1z" fill="#b4b4b4" /></Art></ColHead>
            {heads.map(h => <ColHead key={h} $active={h === 'E'}>{h}</ColHead>)}
            <LastHead>R</LastHead>
            <RowHead>1</RowHead>
            {['CustomerID', 'LoanDefault', 'AverageBalance', 'Age', 'Entrepreneur'].map(h => <Cell key={h} $bold>{h}</Cell>)}
            {blanks.map(k => <Cell key={k} />)}
            {loans.map(([balance, age], i) => (
              <Line key={i}>
                <RowHead $active={i === 6}>{i + 2}</RowHead>
                <Cell $align="right">{i + 1}</Cell>
                <Cell>0</Cell>
                <Cell $align="right">{balance}</Cell>
                <Cell>{age}</Cell>
                <Cell $selected={i === 6}>0</Cell>
                {blanks.map(k => <Cell key={k} />)}
              </Line>
            ))}
          </Sheet>
          <VScroll>
            <ScrollButton><Art w={6} h={4}><path d="M0 4h6L3 .5z" fill="#666" /></Art></ScrollButton>
            <VThumb />
            <VTrack />
            <ScrollButton><CaretDown c="#666" /></ScrollButton>
          </VScroll>
        </SheetArea>
        <SheetTabs>
          <NavArrows>
            <Art w={6} h={8}><path d="M5 0v8L1 4z" fill="#c2c2c2" /></Art>
            <Art w={6} h={8}><path d="M1 0v8l4-4z" fill="#c2c2c2" /></Art>
          </NavArrows>
          <SheetTab><Narrow $by={0.95}>LoanCustomerData</Narrow></SheetTab>
          <AddSheet><Art w={17}><circle cx="8.500" cy="8.500" r="7" stroke="#777" /><path d="M8.500 5v7M5 8.500h7" stroke="#666" strokeWidth="1.500" /></Art></AddSheet>
          <HScroll>
            <HThumb />
            <HTrack />
            <ScrollButton><Art w={4} h={7}><path d="M0 0v7l4-3.500z" fill="#555" /></Art></ScrollButton>
          </HScroll>
        </SheetTabs>
        <StatusBar>
          <Narrow $by={0.93} $from="left">Ready</Narrow>
          <Gap $w={16} />
          <Art w={13}><path d="M3.500 3.500h9v9h-11v-7M2 6h10M2 8.500h10M2 10.500h10M5 5v7M9 5v7" stroke="#888" /><circle cx="3" cy="3" r="2.500" fill="#666" /></Art>
          <Gap />
          <ViewButton $active><Art w={13} h={12}><path d="M.5.5h12v11H.5zM.5 4h12M.5 8h12M4.500 0v12M8.500 0v12" stroke="#666" /></Art></ViewButton>
          <ViewButton><Art w={13} h={12}><path d="M.5.5h12v11H.5zM3.500 2v8.500h6V2zM5 4.500h3M5 6.500h3M5 8.500h3" stroke="#666" /></Art></ViewButton>
          <ViewButton><Art w={13} h={12}><path d="M.5.5h12v11H.5zM4.500 1v5.500h4V1M8.500 6.500h4" stroke="#666" /></Art></ViewButton>
          <Gap $w={4} />
          <Art w={116} h={12}>
            <path d="M1 6h6" stroke="#555" strokeWidth="1.500" /><path d="M11 6h94" stroke="#a0a0a0" /><rect x="55" y="1" width="4" height="10" fill="#666" /><path d="M108 6h7M111.500 2.500v7" stroke="#555" strokeWidth="1.500" />
          </Art>
          <Zoom><Narrow $by={0.88} $from="left">100%</Narrow></Zoom>
        </StatusBar>
      </Excel>
      <Taskbar>
        <TaskList>
          {tasks.map((t, i) => <Task key={i} $open={t.open} $active={t.active}>{t.art}</Task>)}
        </TaskList>
        <Tray>
          <Narrow $by={0.87} $from="right">Desktop</Narrow>
          <Raquo>»</Raquo>
          <Slot $w={18}><Art w={12} h={8}><path d="M1 7l5-5 5 5" stroke="#fff" strokeWidth="1.300" /></Art></Slot>
          <Slot $w={27}><Art w={16} h={12}><path d="M4.500 3.500h9v7h-9z" stroke="#fff" strokeWidth="1.300" /><path d="M6 7h6v2H6zM14 5.500h1.500v3H14zM1 1h1v2H1zM4 1h1v2H4zM0 3h6v2.500H4V8H2V5.500H0z" fill="#fff" /></Art></Slot>
          <Slot $w={22}><Art w={13}><path d="M1 12Q1 1 12 1M4 12q0-8 8-8M7 12q0-5 5-5" stroke="#bbb" strokeWidth="1.400" /><circle cx="11" cy="11" r="1.600" fill="#fff" /></Art></Slot>
          <Clock>5:45 PM<br />4/6/2020</Clock>
          <Slot $w={40}><Art w={16}><path d="M.8.8h14v11.400h-4l-3 2.800-3-2.800h-4z" stroke="#fff" strokeWidth="1.300" /></Art></Slot>
          <Gap $w={10} />
        </Tray>
      </Taskbar>
      <DialogShadow />
      <PartitionDialog />
      <Pointer width="14" height="20" viewBox="0 0 14 20">
        <path d="M1.500 1.500v15l3.500-3.200 2.300 5.200 2.300-1-2.300-5.200h4.800z" fill="#fff" stroke="#222" />
      </Pointer>
    </Desktop>
  );
}
